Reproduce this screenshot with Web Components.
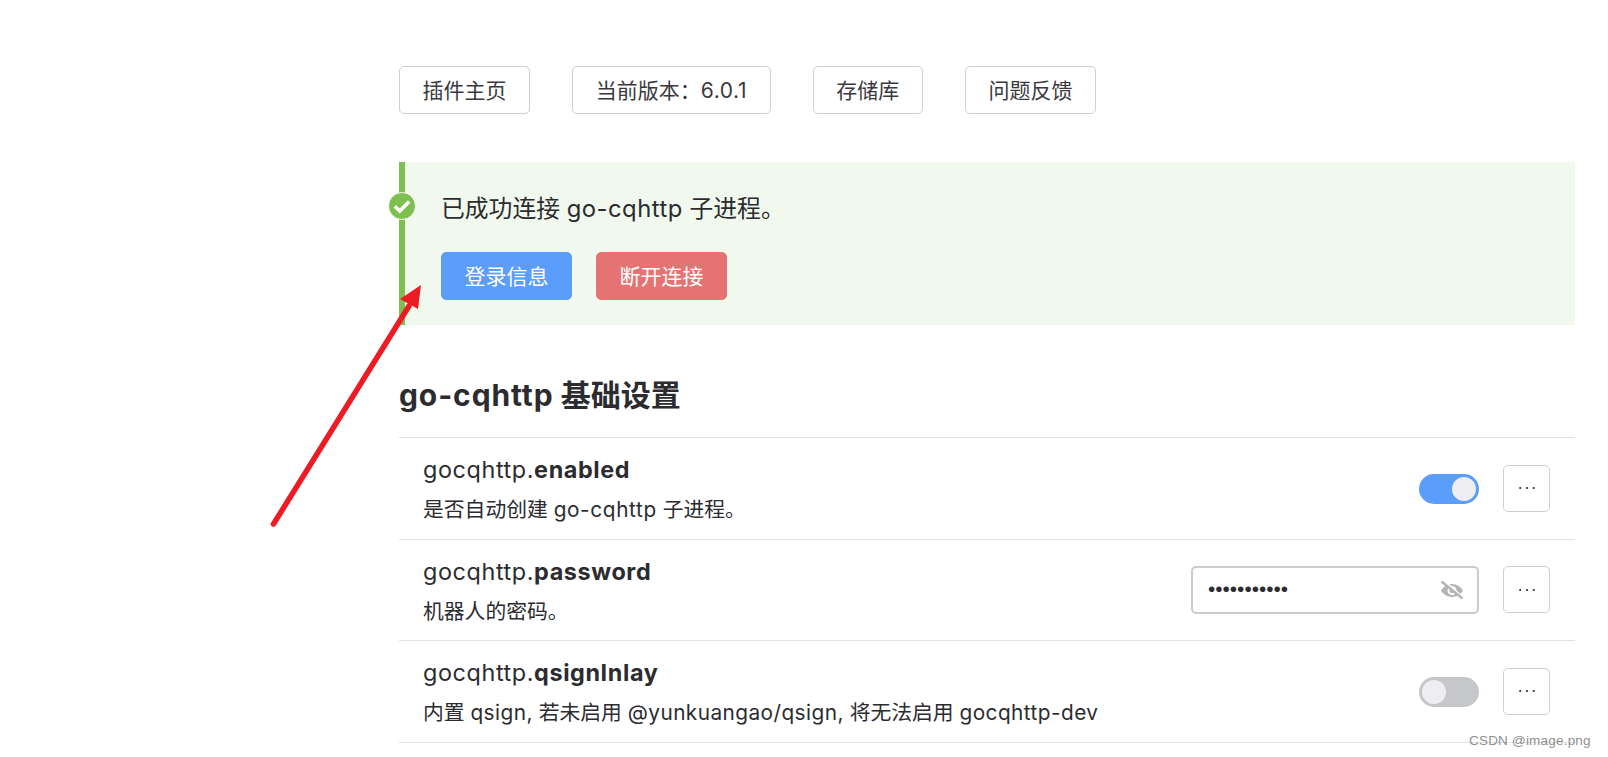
<!doctype html>
<html lang="zh">
<head>
<meta charset="utf-8">
<title>go-cqhttp</title>
<style>
  html, body { margin: 0; background: #fff; height: 100%; overflow: hidden; }
  body { font-family: Inter, "Noto Sans CJK SC", sans-serif; color: #2c2c30; }
  .latin { letter-spacing: .03em; }
  .latin.tight { letter-spacing: .021em; }
</style>
</head>
<body>
<settings-page>
  <k-button slot="toolbar">插件主页</k-button>
  <k-button slot="toolbar">当前版本：<span class="latin">6.0.1</span></k-button>
  <k-button slot="toolbar">存储库</k-button>
  <k-button slot="toolbar">问题反馈</k-button>

  <k-alert slot="alert">
    已成功连接 <span class="latin tight">go-cqhttp</span> 子进程。
    <k-button slot="actions" variant="primary">登录信息</k-button>
    <k-button slot="actions" variant="danger">断开连接</k-button>
  </k-alert>

  <k-section slot="content">
    <span slot="heading"><span class="latin">go-cqhttp</span> 基础设置</span>
    <k-row prefix="gocqhttp." name="enabled">
      是否自动创建 <span class="latin">go-cqhttp</span> 子进程。
      <k-switch slot="control" checked></k-switch>
    </k-row>
    <k-row prefix="gocqhttp." name="password">
      机器人的密码。
      <k-secret slot="control"></k-secret>
    </k-row>
    <k-row prefix="gocqhttp." name="qsignInlay">
      内置 <span class="latin tight">qsign,</span> 若未启用 <span class="latin tight">@yunkuangao/qsign,</span> 将无法启用 <span class="latin tight">gocqhttp-dev</span>
      <k-switch slot="control"></k-switch>
    </k-row>
  </k-section>
</settings-page>
<red-arrow></red-arrow>
<csdn-mark>CSDN @image.png</csdn-mark>

<script>
const FONT = `Inter, "Noto Sans CJK SC", sans-serif`;

function define(name, html, setup) {
  const template = document.createElement("template");
  template.innerHTML = html;
  customElements.define(
    name,
    class extends HTMLElement {
      constructor() {
        super();
        this.attachShadow({ mode: "open" });
        this.shadowRoot.appendChild(template.content.cloneNode(true));
      }
      connectedCallback() {
        if (setup) setup(this, this.shadowRoot);
      }
    }
  );
}

define("settings-page", /* HTML */ `
  <style>
    :host { display: block; padding: 66px 33px 0 399px; }
    .toolbar { display: flex; gap: 42.2px; margin-bottom: 48px; }
  </style>
  <div class="toolbar"><slot name="toolbar"></slot></div>
  <slot name="alert"></slot>
  <slot name="content"></slot>
`);

define("k-button", /* HTML */ `
  <style>
    :host {
      display: inline-flex; align-items: center; justify-content: center;
      box-sizing: border-box; height: 48px; padding: 0 22.5px;
      border: 1px solid #cfcfd2; border-radius: 5px;
      font: 21px/1 ${FONT}; color: #3a3a3e; background: #fff;
      white-space: nowrap;
    }
    :host([variant="primary"]) { background: #5b9dfa; border-color: #5b9dfa; color: #fff; }
    :host([variant="danger"]) { background: #e57373; border-color: #e57373; color: #fff; }
  </style>
  <slot></slot>
`);

define("k-alert", /* HTML */ `
  <style>
    :host {
      display: block; position: relative; box-sizing: border-box; height: 163px;
      padding: 28px 36px 0; border-left: 6px solid #7ec050; background: #f1f9ee;
      font: 23.8px/38px ${FONT}; color: #2c2c30;
    }
    .actions { display: flex; gap: 24px; margin-top: 24px; }
    .mark { position: absolute; left: -17px; top: 30px; width: 28px; height: 28px; }
  </style>
  <svg class="mark" viewBox="0 0 28 28">
    <circle cx="14" cy="14" r="13.5" fill="#7ec050" stroke="#f1f9ee" stroke-width="1"/>
    <path d="M6.800 14.200l5 4.800 9.400-9.400" fill="none" stroke="#fff" stroke-width="3.600"/>
  </svg>
  <slot></slot>
  <div class="actions"><slot name="actions"></slot></div>
`);

define("k-section", /* HTML */ `
  <style>
    :host { display: block; margin-top: 50px; }
    h2 {
      margin: 0 0 22px; font: 700 30px/40px ${FONT}; color: #2c2c30;
    }
    .rows { border-bottom: 1px solid #e2e2e4; }
  </style>
  <h2><slot name="heading"></slot></h2>
  <div class="rows"><slot></slot></div>
`);

define("k-row", /* HTML */ `
  <style>
    :host {
      display: flex; align-items: center; box-sizing: border-box; height: 101.5px;
      padding: 0 25px 0 24px; border-top: 1px solid #e2e2e4; gap: 24px;
    }
    .text { flex: 1; min-width: 0; padding-top: 4px; }
    .title { font: 23.4px/38px ${FONT}; color: #2c2c30; letter-spacing: .6px; }
    .title b { font-weight: 700; }
    .desc { font: 20.8px/38px ${FONT}; color: #2c2c30; white-space: nowrap; margin-top: 2px; }
    .more {
      box-sizing: border-box; width: 47px; height: 47px; flex: none;
      display: flex; align-items: center; justify-content: center;
      border: 1px solid #cfcfd2; border-radius: 5px;
    }
  </style>
  <div class="text">
    <div class="title"><span class="prefix"></span><b class="name"></b></div>
    <div class="desc"><slot></slot></div>
  </div>
  <slot name="control"></slot>
  <div class="more">
    <svg width="16" height="4" viewBox="0 0 16 4" fill="#2c2c30">
      <circle cx="1.200" cy="2" r="1.100"/><circle cx="8" cy="2" r="1.100"/><circle cx="14.800" cy="2" r="1.100"/>
    </svg>
  </div>
`, (el, root) => {
  root.querySelector(".prefix").textContent = el.getAttribute("prefix");
  root.querySelector(".name").textContent = el.getAttribute("name");
});

define("k-switch", /* HTML */ `
  <style>
    :host {
      display: flex; align-items: center; box-sizing: border-box;
      width: 60px; height: 30px; padding: 3px; border-radius: 15px; margin-top: 2px;
      background: #c6c7ca; flex: none;
    }
    :host([checked]) { background: #5b9dfa; justify-content: flex-end; }
    i { display: block; width: 24px; height: 24px; border-radius: 50%; background: #eeeef2; }
  </style>
  <i></i>
`);

define("k-secret", /* HTML */ `
  <style>
    :host {
      display: flex; align-items: center; justify-content: space-between; flex: none;
      box-sizing: border-box; width: 288px; height: 48px; padding: 0 13px 0 15px;
      border: 2px solid #cbcbce; border-radius: 5px;
      font: 20.8px/1 "Liberation Sans", sans-serif; color: #2c2c30;
    }
    svg { display: block; }
  </style>
  <span>•••••••••••</span>
  <svg width="24" height="20" viewBox="0 0 24 20">
    <path fill="#b4b4b6" d="M12 4C7 4 3 7 1 10.500 3 14 7 17 12 17c5 0 9-3 11-6.500C21 7 17 4 12 4zm0 11a4.500 4.500 0 1 1 0-9 4.500 4.500 0 0 1 0 9z"/>
    <circle cx="12" cy="10.500" r="2.600" fill="#b4b4b6"/>
    <path d="M2.500 0l20 17.500" stroke="#fff" stroke-width="2.500"/>
    <path d="M1.500 1.500l21 17" stroke="#b4b4b6" stroke-width="2.400"/>
  </svg>
`);

define("red-arrow", /* HTML */ `
  <style>
    :host { position: absolute; left: 0; top: 0; pointer-events: none; }
    svg { display: block; }
  </style>
  <svg width="1608" height="757" viewBox="0 0 1608 757">
    <path d="M273.500 524 L409 306" stroke="#ed1c24" stroke-width="5.500" stroke-linecap="round" fill="none"/>
    <path d="M421 285 L400 299 L418 309 Z" fill="#ed1c24"/>
  </svg>
`);

define("csdn-mark", /* HTML */ `
  <style>
    :host {
      position: absolute; left: 1469px; top: 732px;
      font: 13.500px/18px "Liberation Sans", sans-serif; color: #8f8f8f;
      white-space: nowrap; letter-spacing: .2px;
    }
  </style>
  <slot></slot>
`);
</script>
</body>
</html>
